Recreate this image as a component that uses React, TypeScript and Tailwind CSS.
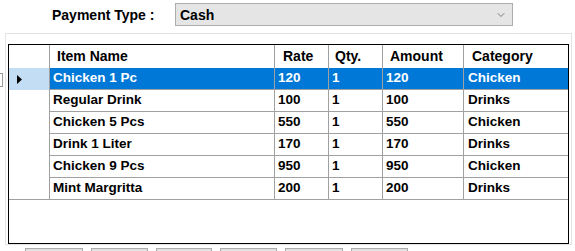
import { ChevronDown } from 'lucide-react';

const rows = [
  { name: 'Chicken 1 Pc', rate: '120', qty: '1', amount: '120', cat: 'Chicken' },
  { name: 'Regular Drink', rate: '100', qty: '1', amount: '100', cat: 'Drinks' },
  { name: 'Chicken 5 Pcs', rate: '550', qty: '1', amount: '550', cat: 'Chicken' },
  { name: 'Drink 1 Liter', rate: '170', qty: '1', amount: '170', cat: 'Drinks' },
  { name: 'Chicken 9 Pcs', rate: '950', qty: '1', amount: '950', cat: 'Chicken' },
  { name: 'Mint Margritta', rate: '200', qty: '1', amount: '200', cat: 'Drinks' },
];

const cols = 'grid grid-cols-[41px_225px_54px_54px_81px_1fr]';

export default function App() {
  return (
    <div className="relative w-[575px] h-[251px] overflow-hidden bg-white text-black font-['Liberation_Sans',Arial,sans-serif] font-bold">
      {/* 결제 방식 */}
      <div className="flex items-center h-[27px] pt-[2px]">
        <span className="ml-[52px] w-[123px] text-[14px] leading-none">Payment Type :</span>
        <div className="flex items-center justify-between w-[338px] h-[23px] bg-[#e5e5e5] border border-[#adadad] pl-[4px] pr-[5px]">
          <span className="text-[14px] leading-none">Cash</span>
          <ChevronDown size={12} strokeWidth={1.5} className="text-[#5a5a5a]" />
        </div>
      </div>

      {/* 잘린 컨트롤 */}
      <div className="absolute left-[-8px] top-[73px] w-[11px] h-[14px] border border-[#9a9a9a] bg-white" />

      {/* 그룹 박스 */}
      <div className="ml-[5px] mt-[6px] w-[567px] h-[212px] border border-[#e3e3e3] pl-[2px] pt-[10px]">
        <div className="w-[561px] h-[200px] border border-black bg-white text-[13.5px]">
          {/* 헤더 */}
          <div className={`${cols} h-[23px]`}>
            <div className="border-r border-[#a0a0a0]" />
            <div className="flex items-center pl-[7px] text-[14px] border-r border-[#a0a0a0]">Item Name</div>
            <div className="flex items-center pl-[8px] text-[14px] border-r border-[#a0a0a0]">Rate</div>
            <div className="flex items-center pl-[6px] text-[14px] border-r border-[#a0a0a0]">Qty.</div>
            <div className="flex items-center pl-[7px] text-[14px] border-r border-[#a0a0a0]">Amount</div>
            <div className="flex items-center pl-[8px] text-[14px]">Category</div>
          </div>

          {/* 행 */}
          {rows.map((r, i) => {
            const sel = i === 0;
            const cell = `flex items-center pl-[3px] border-b border-[#a0a0a0] ${sel ? 'bg-[#0078d7] text-white' : ''}`;
            return (
              <div key={r.name} className={`${cols} h-[22px]`}>
                <div
                  className={`flex items-center pl-[8px] border-r border-[#a0a0a0] ${
                    i === rows.length - 1 ? 'border-b' : ''
                  } ${sel ? 'bg-[#c3ddf4]' : ''}`}
                >
                  {sel && (
                    <svg width="5" height="9" viewBox="0 0 5 9">
                      <path d="M0 0 L5 4.5 L0 9 Z" fill="#000" />
                    </svg>
                  )}
                </div>
                <div className={`${cell} border-r`}>{r.name}</div>
                <div className={`${cell} border-r`}>{r.rate}</div>
                <div className={`${cell} border-r`}>{r.qty}</div>
                <div className={`${cell} border-r`}>{r.amount}</div>
                <div className={`${cell} pl-[4px]`}>{r.cat}</div>
              </div>
            );
          })}
        </div>
      </div>

      {/* 하단 버튼 */}
      <div className="flex gap-[8px] ml-[25px] mt-[3px]">
        {[58, 57, 56, 57, 58, 57].map((w, i) => (
          <div key={i} style={{ width: w }} className="h-[24px] bg-[#e1e1e1] border border-[#adadad]" />
        ))}
      </div>
    </div>
  );
}
